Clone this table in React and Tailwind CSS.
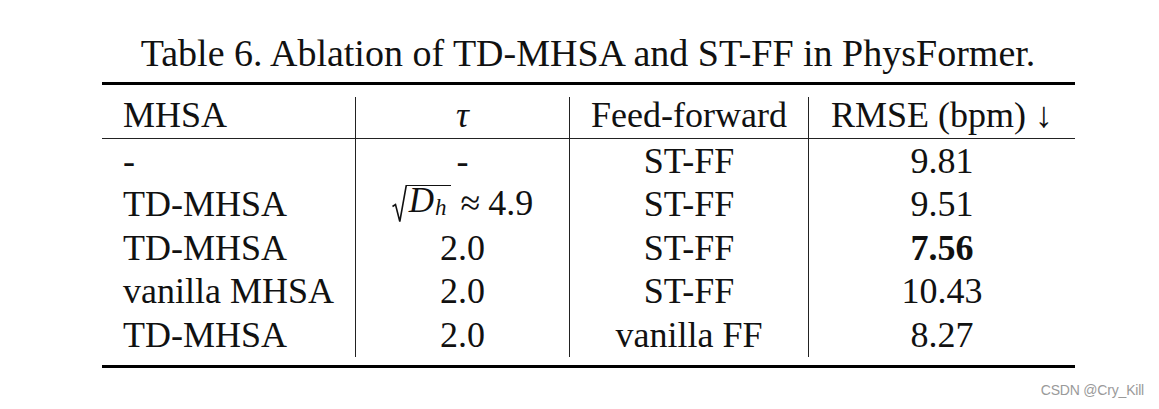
import React from "react";

const rows = [
  { mhsa: "-", tau: "-", ff: "ST-FF", rmse: "9.81" },
  { mhsa: "TD-MHSA", tau: "sqrt", ff: "ST-FF", rmse: "9.51" },
  { mhsa: "TD-MHSA", tau: "2.0", ff: "ST-FF", rmse: "7.56", best: true },
  { mhsa: "vanilla MHSA", tau: "2.0", ff: "ST-FF", rmse: "10.43" },
  { mhsa: "TD-MHSA", tau: "2.0", ff: "vanilla FF", rmse: "8.27" },
];

// sqrt(D_h) ≈ 4.9, radical drawn as svg
function SqrtDh() {
  return (
    <span className="inline-flex items-start">
      <svg width="15" height="38" viewBox="0 0 15 38" className="shrink-0">
        <path d="M0.5 21.5 L3.5 19.5 L7.8 36.5 L14.2 0.8 L15 0.8" fill="none" stroke="#111" strokeWidth="1.6" strokeLinejoin="miter" />
      </svg>
      <span className="border-t-[1.6px] border-[#111] text-[35px] leading-[30px] pl-[2px] pr-[4px] italic">
        D<span className="text-[23px] relative top-[3px] ml-[1px]">h</span>
      </span>
      <span className="ml-[10px]">≈</span>
      <span className="ml-[8px]">4.9</span>
    </span>
  );
}

export default function App() {
  return (
    <div className="w-[1159px] h-[409px] bg-white text-[#111] font-['Liberation_Serif',serif] flex flex-col">
      <div className="text-center text-[38px] leading-none pt-[34px] pl-[17px] h-[82px]">
        Table 6. Ablation of TD-MHSA and ST-FF in PhysFormer.
      </div>

      <div className="ml-[102px] w-[973px] border-t-[3px] border-b-[3px] border-black pt-[12px] pb-[8px] text-[36px] leading-none">
        <div className="grid grid-cols-[254px_214px_239px_1fr]">
          <div className="h-[42px] pl-[21px] pb-[5px] flex items-center border-r-[1.5px] border-b-[1.5px] border-[#222]">
            MHSA
          </div>
          <div className="h-[42px] pb-[5px] flex items-center justify-center border-r-[1.5px] border-b-[1.5px] border-[#222] italic">
            τ
          </div>
          <div className="h-[42px] pb-[5px] flex items-center justify-center border-r-[1.5px] border-b-[1.5px] border-[#222]">
            Feed-forward
          </div>
          <div className="h-[42px] pb-[5px] flex items-center justify-center border-b-[1.5px] border-[#222]">
            RMSE (bpm) ↓
          </div>

          {rows.map((r, i) => (
            <React.Fragment key={i}>
              <div className="h-[43.5px] pl-[21px] flex items-center border-r-[1.5px] border-[#222]">
                {r.mhsa}
              </div>
              <div className="h-[43.5px] flex items-center justify-center border-r-[1.5px] border-[#222]">
                {r.tau === "sqrt" ? <SqrtDh /> : r.tau}
              </div>
              <div className="h-[43.5px] flex items-center justify-center border-r-[1.5px] border-[#222]">
                {r.ff}
              </div>
              <div className={`h-[43.5px] flex items-center justify-center ${r.best ? "font-bold" : ""}`}>
                {r.rmse}
              </div>
            </React.Fragment>
          ))}
        </div>
      </div>

      <div className="text-right pr-[15px] pt-[15px] text-[14px] leading-none tracking-[-0.2px] text-[#9a9a9a] font-['Liberation_Sans',sans-serif]">
        CSDN @Cry_Kill
      </div>
    </div>
  );
}
